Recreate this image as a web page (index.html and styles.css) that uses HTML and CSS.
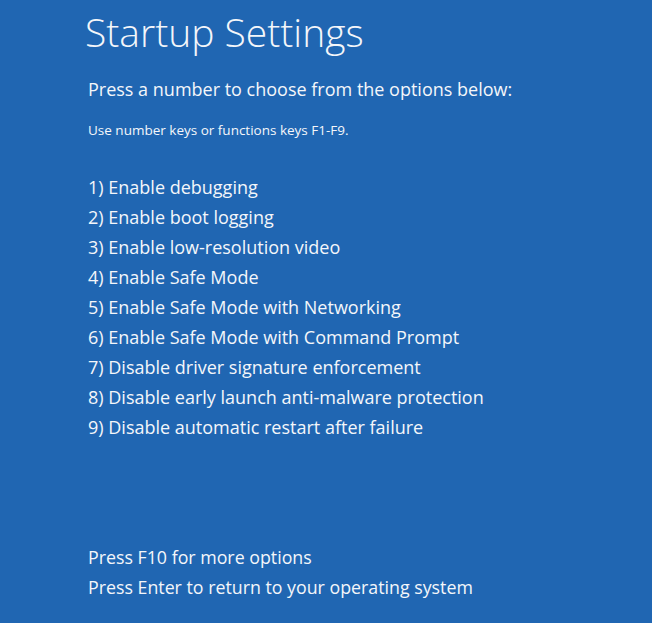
FILE: index.html
```html
<!DOCTYPE html>
<html>
<head>
<meta charset="utf-8">
<link rel="stylesheet" href="styles.css">
</head>
<body>
<main class="screen">
  <h1 class="title">Startup Settings</h1>
  <p class="lead">Press a number to choose from the options below:</p>
  <p class="hint">Use number keys or functions keys F1-F9.</p>
  <ol class="options">
    <li>1) Enable debugging</li>
    <li>2) Enable boot logging</li>
    <li>3) Enable low-resolution video</li>
    <li>4) Enable Safe Mode</li>
    <li>5) Enable Safe Mode with Networking</li>
    <li>6) Enable Safe Mode with Command Prompt</li>
    <li>7) Disable driver signature enforcement</li>
    <li>8) Disable early launch anti-malware protection</li>
    <li>9) Disable automatic restart after failure</li>
  </ol>
  <div class="footer">
    <p class="line">Press F10 for more options</p>
    <p class="line">Press Enter to return to your operating system</p>
  </div>
</main>
</body>
</html>
```
FILE: styles.css
```css
html, body {
  margin: 0;
  padding: 0;
  height: 100%;
  background: #2066b2;
}
.screen {
  box-sizing: border-box;
  height: 623px;
  padding: 8px 0 0 88px;
  display: flex;
  flex-direction: column;
  color: #f4f6fa;
  font-family: "Open Sans", "Noto Sans", sans-serif;
}
.title {
  margin: 0 0 0 -3px;
  font-size: 39px;
  font-weight: 300;
  line-height: 48px;
}
.lead {
  margin: 18px 0 0 0;
  font-size: 18px;
  font-weight: 400;
  line-height: 30px;
}
.hint {
  margin: 16px 0 0 0;
  font-size: 13.5px;
  line-height: 20px;
}
.options {
  list-style: none;
  margin: 32px 0 0 0;
  padding: 0;
  font-size: 18px;
  line-height: 30px;
}
.footer {
  margin-top: auto;
  padding-bottom: 21px;
  font-size: 17.8px;
  line-height: 30px;
}
.line {
  margin: 0;
}
```
